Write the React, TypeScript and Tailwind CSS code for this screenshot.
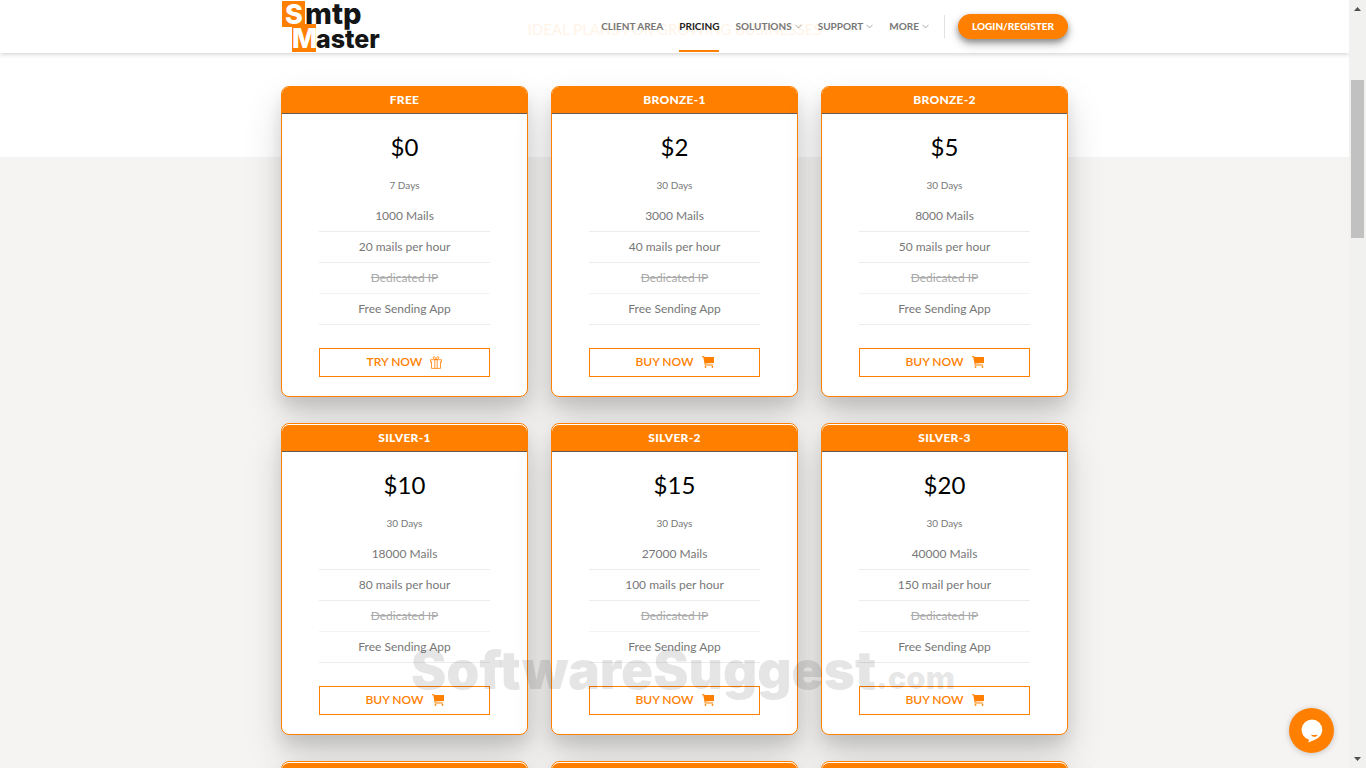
import clsx from 'clsx';

type Plan = {
  name: string;
  price: string;
  period: string;
  mails: string;
  rate: string;
  trial?: boolean;
};

const plans: Plan[] = [
  { name: 'FREE', price: '$0', period: '7 Days', mails: '1000 Mails', rate: '20 mails per hour', trial: true },
  { name: 'BRONZE-1', price: '$2', period: '30 Days', mails: '3000 Mails', rate: '40 mails per hour' },
  { name: 'BRONZE-2', price: '$5', period: '30 Days', mails: '8000 Mails', rate: '50 mails per hour' },
  { name: 'SILVER-1', price: '$10', period: '30 Days', mails: '18000 Mails', rate: '80 mails per hour' },
  { name: 'SILVER-2', price: '$15', period: '30 Days', mails: '27000 Mails', rate: '100 mails per hour' },
  { name: 'SILVER-3', price: '$20', period: '30 Days', mails: '40000 Mails', rate: '150 mail per hour' },
];

const navItems = [
  { label: 'CLIENT AREA' },
  { label: 'PRICING', active: true },
  { label: 'SOLUTIONS', menu: true },
  { label: 'SUPPORT', menu: true },
  { label: 'MORE', menu: true },
];

function Logo() {
  return (
    <svg width="102" height="53" viewBox="0 0 102 53" className="overflow-visible" role="img" aria-label="Smtp Master">
      <rect x="1" y="1" width="23" height="26" fill="#ff8000" />
      <rect x="11" y="24" width="24" height="28" fill="#ff8000" />
      <g fontFamily="Inter, sans-serif" fontWeight="800">
        <text x="4" y="24" fontSize="27" fill="#fff">S</text>
        <text x="24" y="24" fontSize="29" fill="#151515">mtp</text>
        <text x="11" y="48" fontSize="27" fill="#fff">M</text>
        <text x="35" y="48" fontSize="25" fill="#151515">aster</text>
      </g>
    </svg>
  );
}

function Chevron() {
  return (
    <svg width="7" height="5" viewBox="0 0 7 5" fill="none" stroke="#aaa" aria-hidden="true">
      <path d="M.5 .8 3.5 4 6.5 .8" />
    </svg>
  );
}

function CartIcon() {
  return (
    <svg width="12" height="12" viewBox="0 0 12 12" fill="#ff8000" aria-hidden="true">
      <path d="M0 .3h2.300l.3.700H12v5.900L3.200 7.400l.3 1.100h7.600v.9H2.800L1.300 1.300H0z" />
      <circle cx="3.500" cy="10.900" r=".9" />
      <circle cx="10.500" cy="10.900" r=".9" />
    </svg>
  );
}

function GiftIcon() {
  return (
    <svg width="12" height="13" viewBox="0 0 12 13" fill="none" stroke="#ff8000" strokeWidth="0.8" aria-hidden="true">
      <path d="M1.500 6.300H.6V3.700h10.800v2.600h-.9M1.500 5.500v6.900h9V5.500M4.800 3.700v8.700M7.200 3.700v8.700" />
      <path d="M6 3.600C3.600 3.200 2.600 2 3.300 1c.9-1 2.300.2 2.700 2.600C6.400 1.200 7.800 0 8.700 1 9.400 2 8.400 3.200 6 3.600z" />
    </svg>
  );
}

function CardHeader({ name }: { name: string }) {
  return (
    <h3 className="h-[27px] rounded-t-[7px] border-b border-[#665a55] bg-[#ff8000] text-center text-[12px] leading-[26px] font-black tracking-wide text-white">
      {name}
    </h3>
  );
}

const cardClass =
  'rounded-[8px] border border-[#ff8000] bg-white shadow-[0_19px_38px_rgba(0,0,0,0.15),0_10px_15px_rgba(0,0,0,0.1)]';

function PlanCard({ plan, inset }: { plan: Plan; inset: boolean }) {
  return (
    <article className={clsx(cardClass, inset && 'pt-px')}>
      <CardHeader name={plan.name} />
      <div className="px-[37px] pb-[19px] text-center text-[12px] text-[#777]">
        <p className="pt-[17px] text-[24px] leading-8 text-black">{plan.price}</p>
        <p className="pt-3 text-[10px] leading-5">{plan.period}</p>
        <ul className="pt-[6px] leading-[30px]">
          <li className="border-b border-[#ececec]">{plan.mails}</li>
          <li className="border-b border-[#ececec]">{plan.rate}</li>
          <li className="border-b border-[#f3f3f3] text-[#aaa] line-through">Dedicated IP</li>
          <li className="border-b border-[#ececec]">Free Sending App</li>
        </ul>
        <button className="mt-[23px] flex h-[29px] w-full items-center justify-center gap-2 border border-[#ff8000] pb-px font-semibold text-[#ff8000]">
          {plan.trial ? 'TRY NOW' : 'BUY NOW'}
          {plan.trial ? <GiftIcon /> : <CartIcon />}
        </button>
      </div>
    </article>
  );
}

function SiteHeader() {
  return (
    <header className="absolute inset-x-0 top-0 z-10 h-[53px] bg-white/90 shadow-[0_1px_5px_rgba(0,0,0,0.2)]">
      <div className="mx-auto flex h-full max-w-[787px] items-center justify-between">
        <a href="#">
          <Logo />
        </a>
        <div className="flex h-full items-center">
          <nav className="flex h-full gap-4 text-[10px] font-bold text-[#777]">
            {navItems.map((item) => (
              <a
                key={item.label}
                href="#"
                className={clsx(
                  'flex h-[52px] items-center gap-[3px] border-b-2 pt-[3px]',
                  item.active ? 'border-[#ff8000] text-[#222]' : 'border-transparent',
                )}
              >
                {item.label}
                {item.menu && <Chevron />}
              </a>
            ))}
          </nav>
          <span className="mr-[13px] ml-[15px] h-[23px] w-px bg-[#e2e2e2]" />
          <button className="h-[25px] rounded-full bg-[#ff8000] px-[14px] text-[10px] font-black text-white shadow-[0_3px_6px_rgba(0,0,0,0.4),0_6px_12px_rgba(0,0,0,0.15)]">
            LOGIN/REGISTER
          </button>
        </div>
      </div>
    </header>
  );
}

function ScrollBar() {
  return (
    <div className="flex w-[17px] shrink-0 flex-col items-center bg-[#f1f1f0]" aria-hidden="true">
      <svg width="17" height="17" viewBox="0 0 17 17" fill="#505050">
        <path d="M5 11h7L8.500 7z" />
      </svg>
      <div className="mt-[63px] h-[158px] w-[13px] bg-[#c1c1c1]" />
      <svg className="mt-auto" width="17" height="17" viewBox="0 0 17 17" fill="#505050">
        <path d="M5 6h7L8.500 10z" />
      </svg>
    </div>
  );
}

export default function App() {
  return (
    <div className="flex h-screen overflow-hidden font-['Lato',sans-serif]">
      <div className="relative min-w-0 flex-1 overflow-hidden bg-[linear-gradient(#fff_157px,#f5f4f3_157px)]">
        <SiteHeader />
        <main className="mx-auto max-w-[787px] pt-[17px]">
          <h2 className="text-center text-[15px] leading-6 text-[#ff8000]">IDEAL PLANS FOR GROWING BUSINESSES</h2>
          <div className="mt-[45px] grid grid-cols-3 gap-x-[23px] gap-y-[26px]">
            {plans.map((plan, i) => (
              <PlanCard key={plan.name} plan={plan} inset={i > 2} />
            ))}
            {['GOLD-1', 'GOLD-2', 'GOLD-3'].map((name) => (
              <article key={name} className={clsx(cardClass, 'h-[312px] pt-px')}>
                <div className="h-[27px] rounded-t-[7px] bg-[#ff8000]" />
              </article>
            ))}
          </div>
        </main>
        {/* Watermark */}
        <p className="pointer-events-none absolute inset-x-0 top-[640px] ml-[17px] text-center font-['Inter',sans-serif] text-[53px] leading-[60px] font-black whitespace-nowrap text-black/10">
          SoftwareSuggest<span className="text-[31px]">.com</span>
        </p>
        <button
          aria-label="Open chat"
          className="absolute right-[15px] bottom-[15px] flex size-[45px] items-center justify-center rounded-full bg-[#ff8000] shadow-[0_1px_6px_rgba(0,0,0,0.2)]"
        >
          <svg width="22" height="24" viewBox="0 0 22 24" aria-hidden="true">
            <path d="M11 .5a10.300 10.300 0 0 1 10.300 10.300c0 5.200-4 8.800-8 10.200-2 .8-4 1.400-6.100 2.500l.9-2.800A10.300 10.300 0 0 1 11 .5z" fill="#fff" />
            <path d="M10 15.500c2 .7 4.500.7 6.600 0-.4 3-5.600 3.200-6.600 0z" fill="#ff8000" />
          </svg>
        </button>
      </div>
      <ScrollBar />
    </div>
  );
}
